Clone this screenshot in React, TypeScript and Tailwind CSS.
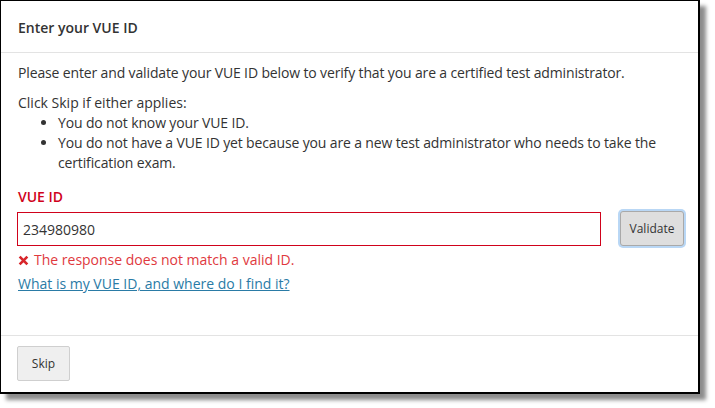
import React, { useState } from "react";

export default function App() {
  const [vueId, setVueId] = useState("234980980");

  return (
    <div className="w-[715px] h-[408px] bg-white" style={{ fontFamily: '"Open Sans", "Liberation Sans", sans-serif' }}>
      <div className="w-[700px] h-[394px] flex flex-col bg-white border border-black border-r-2 border-b-2 shadow-[6px_6px_4px_rgba(0,0,0,0.45)] text-[#333]">
        {/* header */}
        <div className="h-[52px] flex items-center px-4 border-b border-[#e3e3e3] shrink-0">
          <h2 className="text-[14px] font-semibold text-[#333] pt-[1px] pl-[1px]">Enter your VUE ID</h2>
        </div>

        {/* body */}
        <div className="flex-1 pl-4 pr-[14px] pt-[10px] text-[14px] leading-[20px]">
          <p className="pl-[1px] tracking-[-0.01em]">
            Please enter and validate your VUE ID below to verify that you are a certified test administrator.
          </p>
          <p className="mt-[10px] pl-[1px]">Click Skip if either applies:</p>
          <ul className="list-disc pl-[41px] tracking-[-0.01em]">
            <li>You do not know your VUE ID.</li>
            <li>
              You do not have a VUE ID yet because you are a new test administrator who needs to take the
              certification exam.
            </li>
          </ul>

          <label className="block mt-[14px] pl-[1px] font-semibold text-[#d0021b]">VUE ID</label>
          <div className="flex items-start gap-[19px] mt-[5px]">
            <input
              value={vueId}
              onChange={(e) => setVueId(e.target.value)}
              className="flex-1 h-[34px] border border-[#d0021b] px-[5px] text-[14px] text-[#333] outline-none"
            />
            <button className="w-[64px] h-[35px] -mt-[1px] rounded-[3px] border border-[#a9a9a9] bg-[#dedede] text-[12px] text-[#333] ring-2 ring-[#b9d7f5]">
              Validate
            </button>
          </div>
          <div className="flex items-center gap-[5px] mt-[4px] pl-[1px] text-[#e0393e]">
            <svg width="11" height="11" viewBox="0 0 10 10" className="shrink-0">
              <path d="M1.5 1.5 L8.5 8.5 M8.5 1.5 L1.5 8.5" stroke="#d8262b" strokeWidth="2.4" strokeLinecap="butt" />
            </svg>
            <span>The response does not match a valid ID.</span>
          </div>
          <a href="#" className="block mt-[4px] pl-[1px] text-[#2a7ba6] underline w-fit">
            What is my VUE ID, and where do I find it?
          </a>
        </div>

        {/* footer */}
        <div className="h-[57px] border-t border-[#e3e3e3] pl-4 pt-[10px] shrink-0">
          <button className="w-[53px] h-[35px] rounded-[2px] border border-[#cfcfcf] bg-[#efefef] text-[12px] text-[#333]">
            Skip
          </button>
        </div>
      </div>
    </div>
  );
}
